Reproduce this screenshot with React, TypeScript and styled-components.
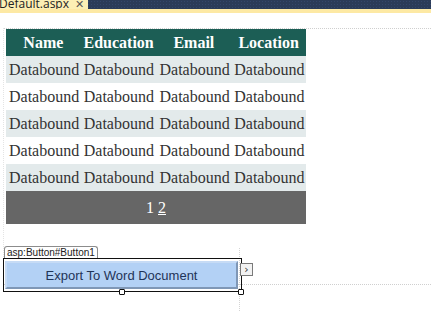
import React from "react";
import styled, { createGlobalStyle } from "styled-components";

const Global = createGlobalStyle`
  html, body { margin: 0; padding: 0; background: #ffffff; }
  body { width: 431px; height: 311px; overflow: hidden; }
`;

const Page = styled.div`
  display: flex;
  flex-direction: column;
  width: 431px;
  height: 311px;
  overflow: hidden;
  background: #fff;
`;

const TabBar = styled.div`
  display: flex;
  flex: 0 0 9px;
  background-color: #2b3b58;
  background-image: radial-gradient(#34466a 1px, transparent 1px);
  background-size: 3px 3px;
`;

const Tab = styled.div`
  width: 88px;
  height: 9px;
  background: #fcefb4;
  overflow: hidden;
  display: flex;
  align-items: flex-end;
  gap: 6px;
  font-family: "Open Sans", "DejaVu Sans", sans-serif;
  font-size: 12px;
  color: #222;
`;

const TabLabel = styled.span`
  line-height: 12px;
  margin-left: -1px;
  margin-bottom: -1px;
  white-space: nowrap;
`;

const TabClose = styled.span`
  line-height: 12px;
  font-size: 11px;
  margin-bottom: -1px;
  color: #555;
`;

const YellowStrip = styled.div`
  flex: 0 0 4px;
  background: #fde9a4;
`;

const Surface = styled.div`
  position: relative;
  flex: 1;
  display: flex;
  flex-direction: column;
  align-items: flex-start;
  padding: 16px 0 0 6px;
`;

const Outline = styled.div`
  position: absolute;
  left: 3px;
  top: 15px;
  right: -2px;
  height: 255px;
  border-top: 1px dotted #cfcfcf;
  border-bottom: 1px dotted #cfcfcf;
  border-left: 1px dotted #e4e4e4;
`;

const VLine = styled.div`
  position: absolute;
  left: 239px;
  top: 235px;
  bottom: 0;
  border-left: 1px dotted #d4d4d4;
`;

const Grid = styled.table`
  position: relative;
  border-collapse: collapse;
  width: 300px;
  font-family: "Liberation Serif", "Times New Roman", serif;
  font-size: 16px;
  color: #333;
`;

const HeadCell = styled.th`
  background: #1c5e55;
  color: #fff;
  font-weight: bold;
  height: 27px;
  padding: 0 2px;
  text-align: center;
`;

const Row = styled.tr<{ $alt: boolean }>`
  background: ${(p) => (p.$alt ? "#ffffff" : "#e3eaeb")};
`;

const Cell = styled.td`
  height: 27px;
  padding: 0 0 0 3px;
  white-space: nowrap;
`;

const Pager = styled.td`
  background: #666666;
  color: #fff;
  height: 33px;
  text-align: center;
  padding: 0;
`;

const PageLink = styled.span`
  text-decoration: underline;
`;

const ButtonZone = styled.div`
  position: relative;
  display: flex;
  flex-direction: column;
  align-items: flex-start;
  margin-top: 22px;
  margin-left: -3px;
`;

const TagLabel = styled.div`
  margin-left: 1px;
  height: 12px;
  padding: 0 2px;
  border: 1px solid #8c8c8c;
  border-bottom: none;
  border-radius: 3px 3px 0 0;
  background: #fff;
  font-family: "Liberation Sans", Arial, sans-serif;
  font-size: 10px;
  line-height: 12px;
  color: #222;
  box-sizing: border-box;
`;

const SelectionRow = styled.div`
  display: flex;
  align-items: flex-start;
`;

const Selection = styled.div`
  width: 239px;
  height: 34px;
  border: 1px solid #111;
  box-sizing: border-box;
  padding: 2px 2px 2px 1px;
`;

const ExportButton = styled.div`
  height: 28px;
  width: 233px;
  box-sizing: border-box;
  background: #b3d1f5;
  border: 2px solid #7f97b6;
  border-top-color: #c6dbf5;
  border-left-color: #c6dbf5;
  display: flex;
  align-items: center;
  justify-content: center;
  font-family: "Liberation Sans", Arial, sans-serif;
  font-size: 13px;
  color: #1f3458;
`;

const SideTools = styled.div`
  display: flex;
  flex-direction: column;
  align-items: flex-start;
  margin-left: -2px;
  padding-top: 5px;
`;

const SmartTag = styled.div`
  width: 13px;
  height: 13px;
  box-sizing: border-box;
  border: 1px solid #7a7a7a;
  background: #f2f2f2;
  display: flex;
  align-items: center;
  justify-content: center;
  font-family: "DejaVu Sans", sans-serif;
  font-size: 11px;
  line-height: 1;
  color: #333;
`;

const HandleStem = styled.div`
  margin-left: 1px;
  width: 1px;
  height: 12px;
  background: #111;
`;

const Handle = styled.div<{ $x: number }>`
  position: absolute;
  left: ${(p) => p.$x}px;
  bottom: -3px;
  width: 6px;
  height: 6px;
  box-sizing: border-box;
  border: 1px solid #111;
  background: #fff;
  border-radius: 1px;
`;

const cols = ["Name", "Education", "Email", "Location"];

export default function App() {
  return (
    <Page>
      <Global />
      <TabBar>
        <Tab>
          <TabLabel>Default.aspx</TabLabel>
          <TabClose>✕</TabClose>
        </Tab>
      </TabBar>
      <YellowStrip />
      <Surface>
        <Outline />
        <VLine />
        <Grid>
          <thead>
            <tr>
              {cols.map((c) => (
                <HeadCell key={c}>{c}</HeadCell>
              ))}
            </tr>
          </thead>
          <tbody>
            {[0, 1, 2, 3, 4].map((r) => (
              <Row key={r} $alt={r % 2 === 1}>
                {cols.map((c) => (
                  <Cell key={c}>Databound</Cell>
                ))}
              </Row>
            ))}
            <tr>
              <Pager colSpan={4}>
                1 <PageLink>2</PageLink>
              </Pager>
            </tr>
          </tbody>
        </Grid>
        <ButtonZone>
          <TagLabel>asp:Button#Button1</TagLabel>
          <SelectionRow>
            <Selection>
              <ExportButton>Export To Word Document</ExportButton>
            </Selection>
            <SideTools>
              <SmartTag>›</SmartTag>
              <HandleStem />
            </SideTools>
          </SelectionRow>
          <Handle $x={116} />
          <Handle $x={235} />
        </ButtonZone>
      </Surface>
    </Page>
  );
}
